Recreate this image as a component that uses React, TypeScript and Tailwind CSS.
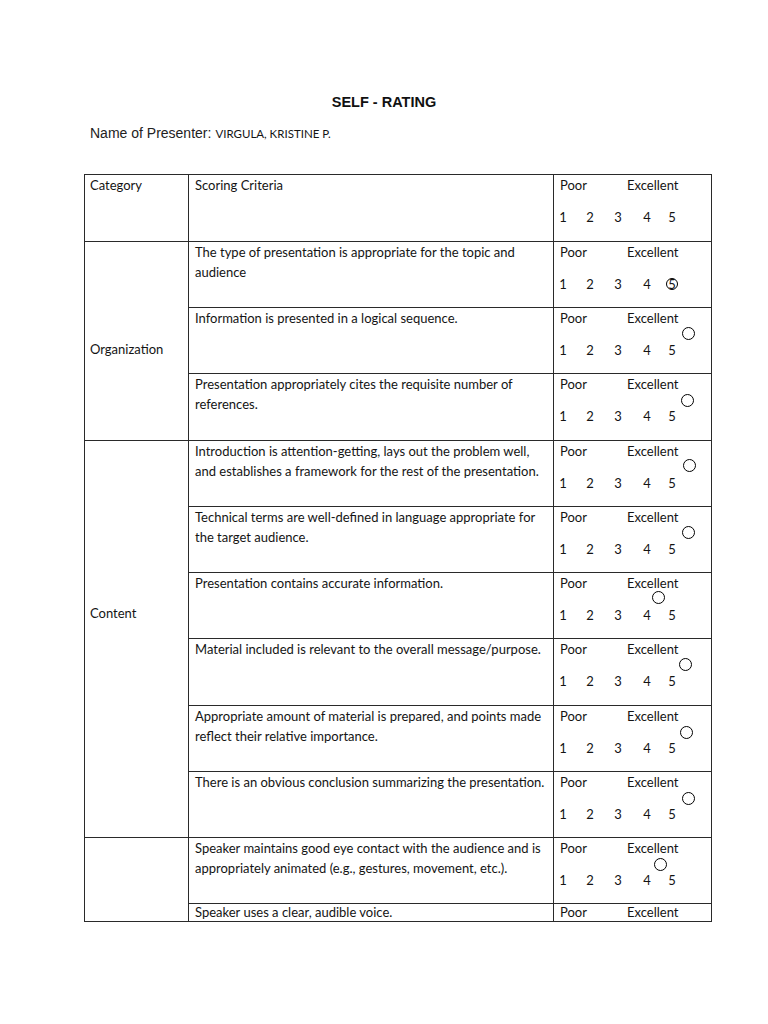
import React from "react";

type Row = {
  text: string[];
  mark?: [number, number]; // circle centre, relative to the score cell
};

const rows: Row[] = [
  { text: ["The type of presentation is appropriate for the topic and", "audience"], mark: [118, 42] },
  { text: ["Information is presented in a logical sequence."], mark: [134, 25] },
  { text: ["Presentation appropriately cites the requisite number of", "references."], mark: [133, 26] },
  { text: ["Introduction is attention-getting, lays out the problem well,", "and establishes a framework for the rest of the presentation."], mark: [135, 24] },
  { text: ["Technical terms are well-defined in language appropriate for", "the target audience."], mark: [134, 25] },
  { text: ["Presentation contains accurate information."], mark: [104, 24] },
  { text: ["Material included is relevant to the overall message/purpose."], mark: [131, 25] },
  { text: ["Appropriate amount of material is prepared, and points made", "reflect their relative importance."], mark: [132, 26] },
  { text: ["There is an obvious conclusion summarizing the presentation."], mark: [134, 26] },
  { text: ["Speaker maintains good eye contact with the audience and is", "appropriately animated (e.g., gestures, movement, etc.)."], mark: [106, 26] },
  { text: ["Speaker uses a clear, audible voice."] },
];

const cell = "border-r border-b border-[#2a2a2a] overflow-hidden whitespace-nowrap";

export default function App() {
  return (
    <div className="min-h-[1024px] w-[768px] bg-white text-[#141414] font-['Lato',sans-serif]">
      {/* Heading */}
      <div className="pt-[92px] text-center font-['Liberation_Sans',Arial,sans-serif] font-bold text-[14.5px] leading-[20px] text-[#111]">
        SELF - RATING
      </div>
      <div className="mt-[11px] pl-[90px] flex items-baseline leading-[20px]">
        <span className="font-['Liberation_Sans',Arial,sans-serif] text-[14px] text-[#222]">Name of Presenter:</span>
        <span className="ml-[4px] text-[11.5px]">VIRGULA, KRISTINE P.</span>
      </div>

      {/* Rating table */}
      <div className="mt-[30px] ml-[84px] w-[628px] border-l border-t border-[#2a2a2a] grid grid-cols-[104px_365px_158px] grid-rows-[67px_66px_66px_67px_66px_66px_66px_67px_66px_66px_66px_18px] text-[13px] leading-[20px]">
        <div className={`${cell} pl-[5px]`}>Category</div>
        <div className={`${cell} pl-[6px]`}>Scoring Criteria</div>
        <ScoreCell />

        <div className={`${cell} row-span-3 pl-[5px] pt-[97px]`}>Organization</div>
        {rows.slice(0, 3).map((r, i) => (
          <RowCells key={i} row={r} circled={i === 0} />
        ))}

        <div className={`${cell} row-span-6 pl-[5px] pt-[162px]`}>Content</div>
        {rows.slice(3, 9).map((r, i) => (
          <RowCells key={i} row={r} />
        ))}

        <div className={`${cell} row-span-2`}></div>
        {rows.slice(9).map((r, i) => (
          <RowCells key={i} row={r} />
        ))}
      </div>
    </div>
  );
}

function RowCells({ row, circled }: { row: Row; circled?: boolean }) {
  const short = !row.mark;
  return (
    <>
      <div className={`${cell} pl-[6px] ${short ? "leading-[17px]" : ""}`}>
        {row.text.map((t) => (
          <div key={t}>{t}</div>
        ))}
      </div>
      <ScoreCell mark={row.mark} circled={circled} numbers={!short} short={short} />
    </>
  );
}

function ScoreCell({
  mark,
  circled,
  numbers = true,
  short,
}: {
  mark?: [number, number];
  circled?: boolean;
  numbers?: boolean;
  short?: boolean;
}) {
  return (
    <div className={`${cell} relative ${short ? "leading-[17px]" : ""}`}>
      <div className="flex pl-[6px]">
        <span className="w-[67px]">Poor</span>
        <span>Excellent</span>
      </div>
      {numbers && (
        <div className="flex mt-[12px]">
          <span className="w-[10px] ml-[4px] text-center">1</span>
          <span className="w-[10px] ml-[17px] text-center">2</span>
          <span className="w-[10px] ml-[18px] text-center">3</span>
          <span className="w-[10px] ml-[19px] text-center">4</span>
          <span className="w-[10px] ml-[15px] text-center">5</span>
        </div>
      )}
      {mark && (
        <div
          className={`absolute rounded-full border-[1.5px] border-black ${circled ? "w-[12px] h-[12px]" : "w-[13px] h-[13px]"}`}
          style={{ left: mark[0] - 6.5, top: mark[1] - 6.5 }}
        />
      )}
    </div>
  );
}
